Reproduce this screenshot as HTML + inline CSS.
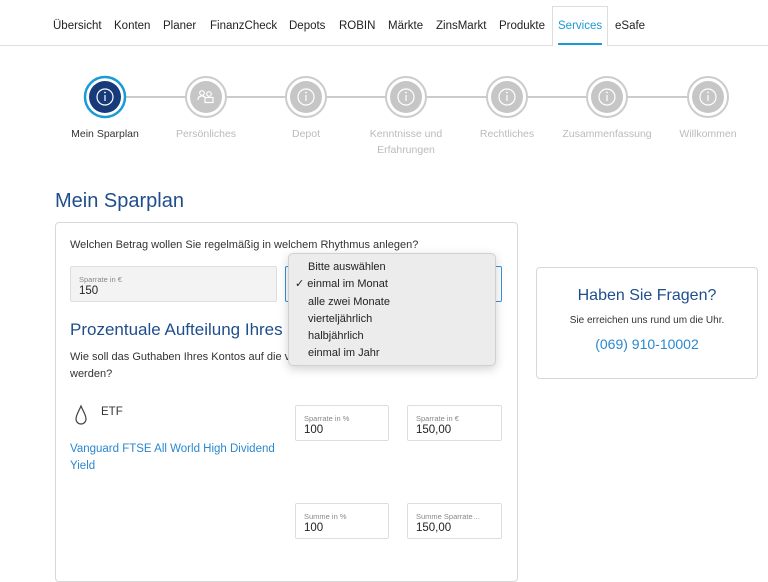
<!DOCTYPE html>
<html><head><meta charset="utf-8"><style>
*{box-sizing:border-box;margin:0;padding:0}
body{width:768px;height:560px;overflow:hidden;background:#fff;font-family:"Liberation Sans",sans-serif;color:#333;position:relative}
.a{position:absolute;white-space:nowrap}
.nav{font-size:11.5px;color:#222;top:20px}
.lbl{font-size:10.5px;color:#bbb;text-align:center;width:110px;line-height:16px;top:126px;white-space:normal}
.inp{position:absolute;border:1px solid #ddd;border-radius:2px;background:#fff}
.inp .s{position:absolute;left:8px;top:8px;font-size:7.5px;color:#888}
.inp .v{position:absolute;left:8px;top:18px;font-size:11.5px;color:#222}
</style></head><body>
<div class="a nav" style="left:53px">Übersicht</div>
<div class="a nav" style="left:114px">Konten</div>
<div class="a nav" style="left:163px">Planer</div>
<div class="a nav" style="left:210px">FinanzCheck</div>
<div class="a nav" style="left:289px">Depots</div>
<div class="a nav" style="left:339px">ROBIN</div>
<div class="a nav" style="left:388px">Märkte</div>
<div class="a nav" style="left:436px">ZinsMarkt</div>
<div class="a nav" style="left:499px">Produkte</div>
<div class="a" style="left:0;top:45px;width:768px;height:1px;background:#ddd"></div>
<div class="a" style="left:552px;top:6px;width:56px;height:40px;border:1px solid #ddd;border-bottom:none;background:#fff"></div>
<div class="a nav" style="left:558px;color:#1a9ad6">Services</div>
<div class="a" style="left:558px;top:43px;width:44px;height:2px;background:#1a9ad6"></div>
<div class="a nav" style="left:615px">eSafe</div>

<svg class="a" style="left:0;top:70px" width="768" height="56">
<line x1="105" y1="27" x2="708" y2="27" stroke="#ccc" stroke-width="2"/>
<g fill="#fff" stroke="#ccc" stroke-width="2">
<circle cx="206" cy="27" r="20"/><circle cx="306" cy="27" r="20"/><circle cx="406" cy="27" r="20"/><circle cx="507" cy="27" r="20"/><circle cx="607" cy="27" r="20"/><circle cx="708" cy="27" r="20"/>
</g>
<g fill="#c6c6c6">
<circle cx="206" cy="27" r="16"/><circle cx="306" cy="27" r="16"/><circle cx="406" cy="27" r="16"/><circle cx="507" cy="27" r="16"/><circle cx="607" cy="27" r="16"/><circle cx="708" cy="27" r="16"/>
</g>
<circle cx="105" cy="27" r="20" fill="#fff" stroke="#1a9ad6" stroke-width="2.5"/>
<circle cx="105" cy="27" r="16" fill="#173b7a"/>
<g fill="none" stroke="#fff" stroke-width="1.2">
<circle cx="105" cy="27" r="8"/><circle cx="306" cy="27" r="8"/><circle cx="406" cy="27" r="8"/><circle cx="507" cy="27" r="8"/><circle cx="607" cy="27" r="8"/><circle cx="708" cy="27" r="8"/>
<path d="M105 25v6M306 25v6M406 25v6M507 25v6M607 25v6M708 25v6"/>
<circle cx="202" cy="23" r="2.3"/><path d="M198 30c0-3 2-4 4-4s3 1 3 2"/><circle cx="209" cy="24" r="2.3"/><rect x="205" y="27.5" width="8" height="5"/>
</g>
<g fill="#fff"><circle cx="105" cy="22.5" r="0.9"/><circle cx="306" cy="22.5" r="0.9"/><circle cx="406" cy="22.5" r="0.9"/><circle cx="507" cy="22.5" r="0.9"/><circle cx="607" cy="22.5" r="0.9"/><circle cx="708" cy="22.5" r="0.9"/></g>
</svg>
<div class="a lbl" style="left:50px;color:#333">Mein Sparplan</div>
<div class="a lbl" style="left:151px">Persönliches</div>
<div class="a lbl" style="left:251px">Depot</div>
<div class="a lbl" style="left:351px">Kenntnisse und Erfahrungen</div>
<div class="a lbl" style="left:452px">Rechtliches</div>
<div class="a lbl" style="left:552px">Zusammenfassung</div>
<div class="a lbl" style="left:653px">Willkommen</div>

<div class="a" style="left:55px;top:190px;font-size:20px;color:#1f4e8c">Mein Sparplan</div>
<div class="a" style="left:55px;top:222px;width:463px;height:360px;border:1px solid #d8d8d8;border-radius:4px"></div>
<div class="a" style="left:70px;top:239px;font-size:11px;color:#333">Welchen Betrag wollen Sie regelmäßig in welchem Rhythmus anlegen?</div>
<div class="inp" style="left:70px;top:266px;width:207px;height:36px;background:#f3f3f3"><div class="s">Sparrate in €</div><div class="v">150</div></div>
<div class="inp" style="left:285px;top:266px;width:217px;height:36px;border-color:#3b8fd6"></div>
<div class="a" style="left:70px;top:320px;font-size:17px;color:#1f4e8c">Prozentuale Aufteilung Ihres …</div>
<div class="a" style="left:70px;top:349px;font-size:11px;line-height:17px;white-space:normal;width:400px">Wie soll das Guthaben Ihres Kontos auf die vorhandenen Anlagen verteilt werden?</div>

<div class="a" style="left:288px;top:253px;width:208px;height:113px;background:#ececec;border:1px solid #d0d0d0;border-radius:5px;box-shadow:0 3px 10px rgba(0,0,0,.18);font-size:11px;color:#222;line-height:17.3px;padding-top:5px">
<div style="padding-left:19px">Bitte auswählen</div>
<div style="padding-left:6px">✓ einmal im Monat</div>
<div style="padding-left:19px">alle zwei Monate</div>
<div style="padding-left:19px">vierteljährlich</div>
<div style="padding-left:19px">halbjährlich</div>
<div style="padding-left:19px">einmal im Jahr</div>
</div>

<svg class="a" style="left:73px;top:404px" width="16" height="24"><path d="M8 2C6 7 3 11 3 15a5 5 0 0 0 10 0C13 11 10 7 8 2z" fill="none" stroke="#444" stroke-width="1.2"/></svg>
<div class="a" style="left:101px;top:406px;font-size:11.5px;color:#333">ETF</div>
<div class="a" style="left:70px;top:441px;font-size:11.5px;line-height:16.5px;color:#2a88cf;white-space:normal;width:210px">Vanguard FTSE All World High Dividend Yield</div>
<div class="inp" style="left:295px;top:405px;width:94px;height:36px"><div class="s">Sparrate in %</div><div class="v">100</div></div>
<div class="inp" style="left:407px;top:405px;width:95px;height:36px"><div class="s">Sparrate in €</div><div class="v">150,00</div></div>
<div class="inp" style="left:295px;top:503px;width:94px;height:36px"><div class="s">Summe in %</div><div class="v">100</div></div>
<div class="inp" style="left:407px;top:503px;width:95px;height:36px"><div class="s">Summe Sparrate…</div><div class="v">150,00</div></div>

<div class="a" style="left:536px;top:267px;width:222px;height:112px;border:1px solid #d8d8d8;border-radius:4px;text-align:center">
<div style="margin-top:19px;font-size:16px;color:#1f4e8c">Haben Sie Fragen?</div>
<div style="margin-top:10px;font-size:10px;color:#333">Sie erreichen uns rund um die Uhr.</div>
<div style="margin-top:10px;font-size:14px;color:#2a88cf">(069) 910-10002</div>
</div>
</body></html>
